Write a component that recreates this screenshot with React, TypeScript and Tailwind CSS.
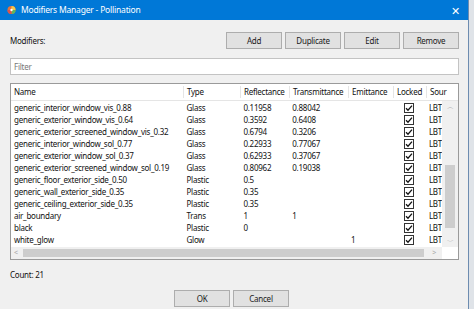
import React from 'react';

const rows: [string, string, string, string, string][] = [
  ['generic_interior_window_vis_0.88', 'Glass', '0.11958', '0.88042', ''],
  ['generic_exterior_window_vis_0.64', 'Glass', '0.3592', '0.6408', ''],
  ['generic_exterior_screened_window_vis_0.32', 'Glass', '0.6794', '0.3206', ''],
  ['generic_interior_window_sol_0.77', 'Glass', '0.22933', '0.77067', ''],
  ['generic_exterior_window_sol_0.37', 'Glass', '0.62933', '0.37067', ''],
  ['generic_exterior_screened_window_sol_0.19', 'Glass', '0.80962', '0.19038', ''],
  ['generic_floor_exterior_side_0.50', 'Plastic', '0.5', '', ''],
  ['generic_wall_exterior_side_0.35', 'Plastic', '0.35', '', ''],
  ['generic_ceiling_exterior_side_0.35', 'Plastic', '0.35', '', ''],
  ['air_boundary', 'Trans', '1', '1', ''],
  ['black', 'Plastic', '0', '', ''],
  ['white_glow', 'Glow', '', '', '1'],
];

function Btn({ label, w = 'w-[56px]' }: { label: string; w?: string }) {
  return (
    <div className={`${w} flex h-[17px] items-center justify-center border border-[#adadad] bg-[#e1e1e1] text-[#1a1a1a]`}>
      {label}
    </div>
  );
}

function Check() {
  return (
    <div className="flex h-[10px] w-[10px] items-center justify-center border border-[#333] bg-white">
      <svg width="8" height="8" viewBox="0 0 8 8">
        <path d="M1 4.2 L3 6.2 L7 1.6" fill="none" stroke="#111" strokeWidth="1.3" />
      </svg>
    </div>
  );
}

function Logo() {
  return (
    <svg width="9" height="10" viewBox="0 0 9 10">
      <circle cx="4.5" cy="5" r="4" fill="#e8723a" />
      <path d="M4.5 1 A4 4 0 0 1 8.5 5 L4.5 5 Z" fill="#f2c94c" />
      <path d="M4.5 5 L8.5 5 A4 4 0 0 1 4.5 9 Z" fill="#5db85c" />
      <path d="M0.5 5 A4 4 0 0 0 4.5 9 L4.5 5 Z" fill="#d9534f" />
      <circle cx="4.5" cy="5" r="1.2" fill="#fff" />
    </svg>
  );
}

export default function App() {
  const font = { fontFamily: '"Noto Sans", "Open Sans", sans-serif' };
  return (
    <div
      className="flex h-[309px] w-[474px] overflow-hidden bg-[#dfe3e8] text-[8px] tracking-[-0.25px]"
      style={font}
    >
      <div className="flex w-[469px] flex-col border-r border-[#6d8cb0] bg-[#f0f0f0]">
        {/* title bar */}
        <div className="flex h-[20px] items-center bg-[#0078d7] pl-[7px] pr-[8px] text-white">
          <Logo />
          <span className="ml-[5px] text-[8.5px] tracking-[-0.2px]">Modifiers Manager - Pollination</span>
          <span className="ml-auto text-[11px] leading-none">✕</span>
        </div>

        {/* toolbar */}
        <div className="mt-[12px] flex items-center pl-[10px] pr-[9px]">
          <span className="text-[#111]">Modifiers:</span>
          <div className="ml-auto flex gap-[3px]">
            <Btn label="Add" />
            <Btn label="Duplicate" />
            <Btn label="Edit" />
            <Btn label="Remove" />
          </div>
        </div>

        {/* filter */}
        <div className="mx-[10px] mr-[9px] mt-[9px] flex h-[17px] items-center border border-[#c3c3c3] bg-white pl-[3px] text-[#777]">
          Filter
        </div>

        {/* table */}
        <div className="mx-[10px] mr-[9px] mt-[8px] flex h-[177px] flex-col border border-[#9a9a9a] bg-white text-[#111]">
          <div className="flex h-[17px] shrink-0 items-center whitespace-nowrap border-b border-[#e5e5e5]">
            <div className="w-[173px] overflow-hidden border-r border-[#e5e5e5] pl-[3px]">Name</div>
            <div className="w-[57px] overflow-hidden border-r border-[#e5e5e5] pl-[3px]">Type</div>
            <div className="w-[49px] overflow-hidden border-r border-[#e5e5e5] pl-[3px]">Reflectance</div>
            <div className="w-[59px] overflow-hidden border-r border-[#e5e5e5] pl-[3px]">Transmittance</div>
            <div className="w-[45px] overflow-hidden border-r border-[#e5e5e5] pl-[3px]">Emittance</div>
            <div className="w-[33px] overflow-hidden border-r border-[#e5e5e5] pl-[3px]">Locked</div>
            <div className="flex-1 overflow-hidden pl-[3px]">Sour</div>
          </div>
          <div className="flex min-h-0 flex-1">
            <div className="flex flex-1 flex-col overflow-hidden pt-[1px]">
              {rows.map((r) => (
                <div key={r[0]} className="flex h-[12px] shrink-0 items-center whitespace-nowrap">
                  <div className="w-[173px] overflow-hidden pl-[3px]">{r[0]}</div>
                  <div className="w-[57px] overflow-hidden pl-[3px]">{r[1]}</div>
                  <div className="w-[49px] overflow-hidden pl-[3px]">{r[2]}</div>
                  <div className="w-[59px] overflow-hidden pl-[3px]">{r[3]}</div>
                  <div className="w-[45px] overflow-hidden pl-[3px]">{r[4]}</div>
                  <div className="flex w-[33px] justify-center">
                    <Check />
                  </div>
                  <div className="pl-[3px]">LBT</div>
                </div>
              ))}
            </div>
            <div className="flex w-[16px] shrink-0 flex-col items-center bg-[#f0f0f0]">
              <span className="mt-[1px] h-[10px] text-[7px] leading-[10px] text-[#aaa]">︿</span>
              <div className="mt-[53px] h-[63px] w-[10px] bg-[#cdcdcd]" />
              <span className="mt-auto h-[10px] text-[7px] leading-[10px] text-[#aaa]">﹀</span>
            </div>
          </div>
          <div className="flex h-[12px] shrink-0">
            <div className="flex flex-1 items-center bg-[#f0f0f0]">
              <span className="w-[12px] pl-[3px] text-[7px] text-[#aaa]">&lt;</span>
              <div className="h-[8px] w-[401px] bg-[#cdcdcd]" />
              <span className="ml-auto pr-[6px] text-[7px] text-[#aaa]">&gt;</span>
            </div>
            <div className="w-[16px] bg-white" />
          </div>
        </div>

        {/* count */}
        <div className="mt-[9px] pl-[10px] text-[#111]">Count: 21</div>

        {/* ok cancel */}
        <div className="mt-[9px] flex justify-center gap-[3px] pr-[5px]">
          <Btn label="OK" />
          <Btn label="Cancel" />
        </div>
      </div>
    </div>
  );
}
